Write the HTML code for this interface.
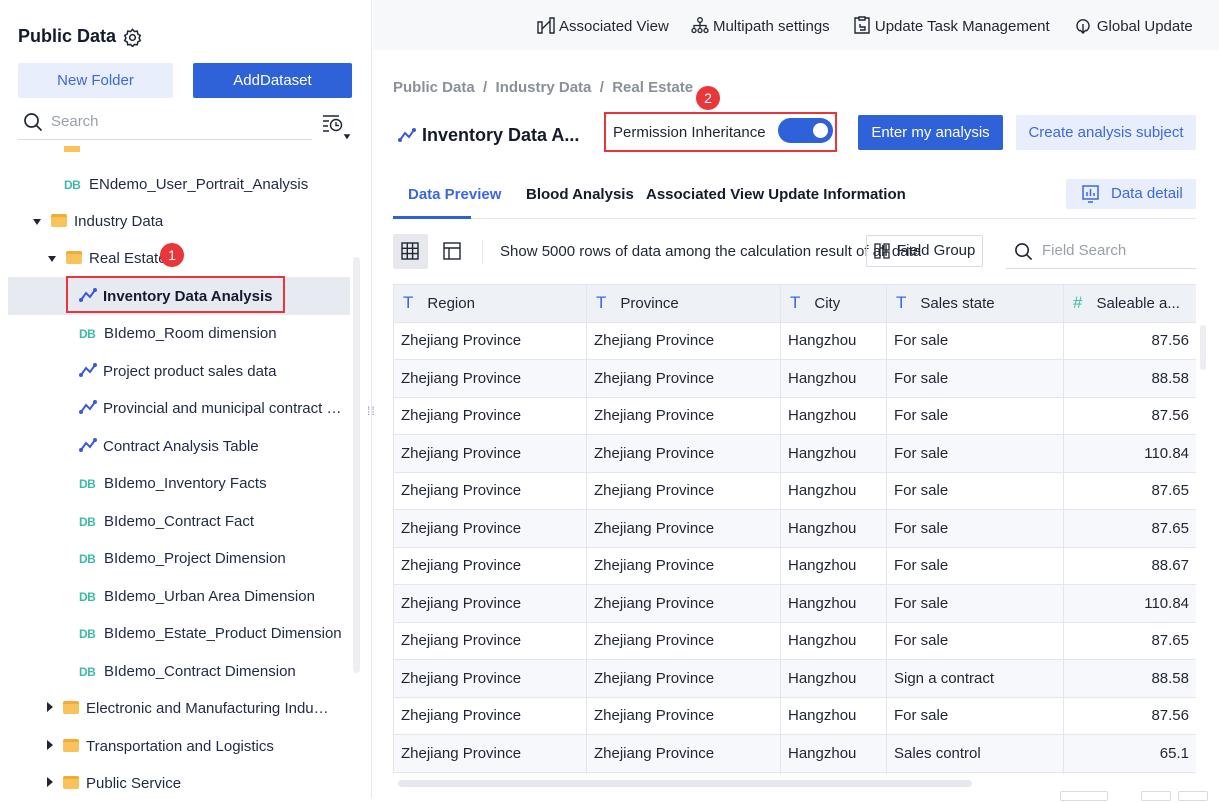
<!DOCTYPE html>
<html><head><meta charset="utf-8"><style>
*{margin:0;padding:0;box-sizing:border-box}
body{width:1219px;height:798px;overflow:hidden;font-family:"Liberation Sans",sans-serif;color:#1f2533;background:#fff;position:relative}
.a{position:absolute;white-space:nowrap}
.left{position:absolute;left:0;top:0;width:372px;height:798px;background:#fff;border-right:1px solid #e6e8ee}
.tr{position:absolute;font-size:15px;color:#1f2a44;height:38px;line-height:38px;white-space:nowrap}
.db{display:inline-block;color:#3dbaa8;font-size:12px;font-weight:bold;width:20px;margin-right:5px;letter-spacing:-0.5px}
.fold{display:inline-block;width:16px;height:13px;background:#f8c35a;border-radius:2px;vertical-align:-1px;margin-right:7px;border-top:3px solid #f0ad35}
.arr{display:inline-block;width:0;height:0;margin-right:10px;vertical-align:1px}
.ad{border-top:5px solid transparent;border-bottom:5px solid transparent;border-left:6px solid #1f2533}
.dn{border-left:4px solid transparent;border-right:4px solid transparent;border-top:6px solid #1f2533}
table{border-collapse:collapse;position:absolute;left:0;top:0;font-size:15px;table-layout:fixed;width:803px}
td,th{height:37.5px;border:1px solid #e3e6ed;padding:0 7px;font-weight:normal;text-align:left;white-space:nowrap;overflow:hidden}
th{background:#eef1f6;color:#1f2533}
th .t{color:#3b68e0;font-size:17px;margin-right:14px;margin-left:2px}
tr:nth-child(odd) td{background:#f7f8fc}
td.n{text-align:right}
.badge{position:absolute;width:24px;height:24px;border-radius:12px;background:#e8363a;color:#fff;font-size:14px;text-align:center;line-height:24px}
</style></head><body>
<div class="left">
 <div class="a" style="left:18px;top:26px;font-size:18px;font-weight:bold;color:#141b2d">Public Data</div>
 <svg class="a" style="left:123px;top:28px" width="19" height="19" viewBox="0 0 20 20" fill="none" stroke="#1f2533" stroke-width="1.6"><circle cx="10" cy="10" r="3"/><path d="M10 1.5l2 2.2 3-.4.6 3 2.6 1.5-1.3 2.7 1.3 2.7-2.6 1.5-.6 3-3-.4-2 2.2-2-2.2-3 .4-.6-3-2.6-1.5 1.3-2.7-1.3-2.7 2.6-1.5.6-3 3 .4z"/></svg>
 <div class="a" style="left:18px;top:63px;width:155px;height:35px;background:#e8eefb;border-radius:2px;color:#3b68e0;font-size:15px;text-align:center;line-height:35px">New Folder</div>
 <div class="a" style="left:193px;top:63px;width:159px;height:35px;background:#2f62d8;border-radius:2px;color:#fff;font-size:15px;text-align:center;line-height:35px">AddDataset</div>
 <div class="a" style="left:64px;top:146px;width:16px;height:6px;background:#f8c35a"></div>
 <div class="a" style="left:88px;top:146px;width:210px;height:6px;overflow:hidden;font-size:15px;line-height:0;color:#1f2a44">&nbsp;</div>
 <svg class="a" style="left:23px;top:112px" width="20" height="20" viewBox="0 0 20 20" fill="none" stroke="#1f2533" stroke-width="1.7"><circle cx="8.5" cy="8.5" r="6.5"/><path d="M13.5 13.5l5 5"/></svg>
 <div class="a" style="left:51px;top:113px;font-size:15px;color:#9aa0ab">Search</div>
 <div class="a" style="left:18px;top:139px;width:294px;height:1px;background:#d8dbe2"></div>
 <svg class="a" style="left:322px;top:113px" width="30" height="26" viewBox="0 0 30 26" fill="none" stroke="#1f2533" stroke-width="1.4"><path d="M1 3h16M1 8h6M1 13h5M1 18h6"/><circle cx="14" cy="12" r="5.5"/><path d="M14 9v3.5h3"/><path d="M23 22l2 3 2-3z" fill="#1f2533"/></svg>
 <div class="tr" style="left:64px;top:166px"><span class="db">DB</span>ENdemo_User_Portrait_Analysis</div>
 <div class="tr" style="left:33px;top:203px"><span class="arr dn"></span><span class="fold"></span>Industry Data</div>
 <div class="tr" style="left:48px;top:240px"><span class="arr dn"></span><span class="fold"></span>Real Estate</div>
 <div class="badge" style="left:160px;top:243px">1</div>
 <div class="a" style="left:8px;top:277px;width:342px;height:38px;background:#e8eaf1"></div>
 <div class="a" style="left:66px;top:276px;width:219px;height:37px;border:2px solid #e8363a"></div>
 <div class="tr" style="left:79px;top:278px;font-weight:bold;color:#141b2d"><svg width="18" height="14" viewBox="0 0 18 14" style="margin-right:6px;vertical-align:-1px"><path d="M2 12L7 5l4 4 5-7" fill="none" stroke="#3b5ad8" stroke-width="2"/><circle cx="2" cy="12" r="2" fill="#3b5ad8"/><circle cx="16" cy="2" r="2" fill="#3b5ad8"/></svg>Inventory Data Analysis</div>
 <div class="tr" style="left:79px;top:315px"><span class="db">DB</span>BIdemo_Room dimension</div>
 <div class="tr" style="left:79px;top:353px"><svg width="18" height="14" viewBox="0 0 18 14" style="margin-right:6px;vertical-align:-1px"><path d="M2 12L7 5l4 4 5-7" fill="none" stroke="#3b5ad8" stroke-width="2"/><circle cx="2" cy="12" r="2" fill="#3b5ad8"/><circle cx="16" cy="2" r="2" fill="#3b5ad8"/></svg>Project product sales data</div>
 <div class="tr" style="left:79px;top:390px"><svg width="18" height="14" viewBox="0 0 18 14" style="margin-right:6px;vertical-align:-1px"><path d="M2 12L7 5l4 4 5-7" fill="none" stroke="#3b5ad8" stroke-width="2"/><circle cx="2" cy="12" r="2" fill="#3b5ad8"/><circle cx="16" cy="2" r="2" fill="#3b5ad8"/></svg>Provincial and municipal contract …</div>
 <div class="tr" style="left:79px;top:428px"><svg width="18" height="14" viewBox="0 0 18 14" style="margin-right:6px;vertical-align:-1px"><path d="M2 12L7 5l4 4 5-7" fill="none" stroke="#3b5ad8" stroke-width="2"/><circle cx="2" cy="12" r="2" fill="#3b5ad8"/><circle cx="16" cy="2" r="2" fill="#3b5ad8"/></svg>Contract Analysis Table</div>
 <div class="tr" style="left:79px;top:465px"><span class="db">DB</span>BIdemo_Inventory Facts</div>
 <div class="tr" style="left:79px;top:503px"><span class="db">DB</span>BIdemo_Contract Fact</div>
 <div class="tr" style="left:79px;top:540px"><span class="db">DB</span>BIdemo_Project Dimension</div>
 <div class="tr" style="left:79px;top:578px"><span class="db">DB</span>BIdemo_Urban Area Dimension</div>
 <div class="tr" style="left:79px;top:615px"><span class="db">DB</span>BIdemo_Estate_Product Dimension</div>
 <div class="tr" style="left:79px;top:653px"><span class="db">DB</span>BIdemo_Contract Dimension</div>
 <div class="tr" style="left:47px;top:690px"><span class="arr ad"></span><span class="fold"></span>Electronic and Manufacturing Indu…</div>
 <div class="tr" style="left:47px;top:728px"><span class="arr ad"></span><span class="fold"></span>Transportation and Logistics</div>
 <div class="tr" style="left:47px;top:765px"><span class="arr ad"></span><span class="fold"></span>Public Service</div>
 <div class="a" style="left:353px;top:257px;width:7px;height:416px;background:#eceef2;border-radius:4px"></div>
</div>
<div class="a" style="left:367px;top:408px;color:#8a93a6;font-size:12px;line-height:6px;letter-spacing:1px">⁞⁞</div>
<div class="a" style="left:373px;top:0;width:846px;height:50px;background:#f7f8fa"></div>
<div class="a" style="left:537px;top:16px;font-size:15px">
 <svg width="18" height="17" viewBox="0 0 18 17" style="vertical-align:-3px;margin-right:4px" fill="none" stroke="#1f2533" stroke-width="1.4"><path d="M1 5h4v11H1zM13 1h4v15h-4zM5 12l8-8"/></svg>Associated View
 <svg width="18" height="17" viewBox="0 0 18 17" style="vertical-align:-3px;margin-left:18px;margin-right:4px" fill="none" stroke="#1f2533" stroke-width="1.3"><circle cx="9" cy="3" r="2.3"/><path d="M9 5.5v3M3 11V8.5h12V11M9 8.5V11"/><circle cx="3" cy="13.5" r="2"/><circle cx="9" cy="13.5" r="2"/><circle cx="15" cy="13.5" r="2"/></svg>Multipath settings
 <svg width="16" height="18" viewBox="0 0 16 18" style="vertical-align:-3px;margin-left:20px;margin-right:5px" fill="none" stroke="#1f2533" stroke-width="1.4"><path d="M5 2H1v15h14V2h-4M5 1h6v3H5z"/><path d="M6 8v3h5v3H6"/></svg>Update Task Management
 <svg width="18" height="18" viewBox="0 0 18 18" style="vertical-align:-3px;margin-left:20px;margin-right:5px" fill="none" stroke="#1f2533" stroke-width="1.4"><path d="M6 15a6 6 0 1 1 6 0M9 8v9M6 14l3 3 3-3"/></svg>Global Update</div>
<div class="a" style="left:393px;top:79px;font-size:15px;color:#8a8f99;font-weight:bold">Public Data &nbsp;/&nbsp; Industry Data &nbsp;/&nbsp; Real Estate</div>
<div class="badge" style="left:696px;top:86px">2</div>
<svg class="a" style="left:398px;top:128px" width="18" height="14" viewBox="0 0 18 14"><path d="M2 12L7 5l4 4 5-7" fill="none" stroke="#3b5ad8" stroke-width="2"/><circle cx="2" cy="12" r="2" fill="#3b5ad8"/><circle cx="16" cy="2" r="2" fill="#3b5ad8"/></svg>
<div class="a" style="left:422px;top:125px;font-size:18px;font-weight:bold;color:#141b2d">Inventory Data A...</div>
<div class="a" style="left:604px;top:112px;width:233px;height:40px;border:2px solid #e8363a"></div>
<div class="a" style="left:613px;top:124px;font-size:15px">Permission Inheritance</div>
<div class="a" style="left:778px;top:118px;width:55px;height:25px;background:#2f62d8;border-radius:13px"><div style="position:absolute;right:5px;top:5px;width:15px;height:15px;border-radius:8px;background:#fff"></div></div>
<div class="a" style="left:858px;top:115px;width:145px;height:35px;background:#2f62d8;color:#fff;font-size:15px;text-align:center;line-height:35px;border-radius:2px">Enter my analysis</div>
<div class="a" style="left:1016px;top:115px;width:180px;height:35px;background:#e8eefb;color:#3b68e0;font-size:15px;text-align:center;line-height:35px;border-radius:2px">Create analysis subject</div>
<div class="a" style="left:408px;top:186px;font-size:15px;font-weight:bold;color:#3b68e0">Data Preview</div>
<div class="a" style="left:526px;top:186px;font-size:15px;font-weight:bold;color:#141b2d">Blood Analysis</div>
<div class="a" style="left:646px;top:186px;font-size:15px;font-weight:bold;color:#141b2d">Associated View Update Information</div>
<div class="a" style="left:393px;top:218px;width:803px;height:1px;background:#e3e6ed"></div>
<div class="a" style="left:393px;top:216px;width:78px;height:3px;background:#2f62d8"></div>
<div class="a" style="left:1066px;top:179px;width:130px;height:30px;background:#e8eefb;color:#3b68e0;font-size:15px;line-height:30px;padding-left:45px;border-radius:2px">Data detail</div>
<svg class="a" style="left:1082px;top:185px" width="17" height="18" viewBox="0 0 17 18" fill="none" stroke="#3b68e0" stroke-width="1.5"><rect x="1" y="1" width="15" height="13"/><path d="M5 11V7M8.5 11V4M12 11V8M6 17h5"/></svg>
<div class="a" style="left:393px;top:234px;width:35px;height:35px;background:#e6e8ee;border-radius:2px"></div>
<svg class="a" style="left:401px;top:242px" width="18" height="18" viewBox="0 0 18 18" fill="none" stroke="#1f2533" stroke-width="1.4"><rect x="1" y="1" width="16" height="16"/><path d="M6.3 1v16M11.6 1v16M1 6.3h16M1 11.6h16"/></svg>
<svg class="a" style="left:443px;top:242px" width="18" height="18" viewBox="0 0 18 18" fill="none" stroke="#1f2533" stroke-width="1.4"><rect x="1" y="1" width="16" height="16"/><path d="M1 6h16M6 6v11"/></svg>
<div class="a" style="left:482px;top:240px;width:1px;height:24px;background:#e3e6ed"></div>
<div class="a" style="left:500px;top:243px;font-size:15px">Show 5000 rows of data among the calculation result of all data</div>
<div class="a" style="left:866px;top:235px;width:117px;height:32px;border:1px solid #d8dbe2;font-size:15px;line-height:30px;padding-left:30px;border-radius:2px">Field Group</div>
<svg class="a" style="left:874px;top:243px" width="16" height="16" viewBox="0 0 16 16" fill="none" stroke="#1f2533" stroke-width="1.3"><path d="M1 1h5v14H1zM6 5h4M10 1h5v6h-5zM10 9h5v6h-5z"/></svg>
<svg class="a" style="left:1014px;top:242px" width="19" height="19" viewBox="0 0 20 20" fill="none" stroke="#1f2533" stroke-width="1.7"><circle cx="8.5" cy="8.5" r="6.5"/><path d="M13.5 13.5l5 5"/></svg>
<div class="a" style="left:1042px;top:242px;font-size:15px;color:#9aa0ab">Field Search</div>
<div class="a" style="left:1006px;top:268px;width:190px;height:1px;background:#d8dbe2"></div>
<div class="a" style="left:393px;top:284px;width:803px;height:490px;overflow:hidden">
<table>
<colgroup><col style="width:193px"><col style="width:194px"><col style="width:106px"><col style="width:177px"><col style="width:133px"></colgroup>
<tr><th><span class="t">T</span>Region</th><th><span class="t">T</span>Province</th><th><span class="t">T</span>City</th><th><span class="t">T</span>Sales state</th><th><span class="t" style="color:#3dbaa8">#</span>Saleable a...</th></tr>
<tr><td>Zhejiang Province</td><td>Zhejiang Province</td><td>Hangzhou</td><td>For sale</td><td class="n">87.56</td></tr>
<tr><td>Zhejiang Province</td><td>Zhejiang Province</td><td>Hangzhou</td><td>For sale</td><td class="n">88.58</td></tr>
<tr><td>Zhejiang Province</td><td>Zhejiang Province</td><td>Hangzhou</td><td>For sale</td><td class="n">87.56</td></tr>
<tr><td>Zhejiang Province</td><td>Zhejiang Province</td><td>Hangzhou</td><td>For sale</td><td class="n">110.84</td></tr>
<tr><td>Zhejiang Province</td><td>Zhejiang Province</td><td>Hangzhou</td><td>For sale</td><td class="n">87.65</td></tr>
<tr><td>Zhejiang Province</td><td>Zhejiang Province</td><td>Hangzhou</td><td>For sale</td><td class="n">87.65</td></tr>
<tr><td>Zhejiang Province</td><td>Zhejiang Province</td><td>Hangzhou</td><td>For sale</td><td class="n">88.67</td></tr>
<tr><td>Zhejiang Province</td><td>Zhejiang Province</td><td>Hangzhou</td><td>For sale</td><td class="n">110.84</td></tr>
<tr><td>Zhejiang Province</td><td>Zhejiang Province</td><td>Hangzhou</td><td>For sale</td><td class="n">87.65</td></tr>
<tr><td>Zhejiang Province</td><td>Zhejiang Province</td><td>Hangzhou</td><td>Sign a contract</td><td class="n">88.58</td></tr>
<tr><td>Zhejiang Province</td><td>Zhejiang Province</td><td>Hangzhou</td><td>For sale</td><td class="n">87.56</td></tr>
<tr><td>Zhejiang Province</td><td>Zhejiang Province</td><td>Hangzhou</td><td>Sales control</td><td class="n">65.1</td></tr>
<tr><td>&nbsp;</td><td></td><td></td><td></td><td></td></tr>
</table></div>
<div class="a" style="left:398px;top:780px;width:574px;height:7px;background:#e6e8ee;border-radius:4px"></div>
<div class="a" style="left:1200px;top:325px;width:6px;height:45px;background:#eceef2;border-radius:3px"></div>
<div class="a" style="left:1060px;top:791px;width:48px;height:10px;border:1px solid #d8dbe2;border-radius:2px"></div>
<div class="a" style="left:1141px;top:791px;width:30px;height:10px;border:1px solid #d8dbe2;border-radius:2px"></div>
<div class="a" style="left:1178px;top:791px;width:30px;height:10px;border:1px solid #d8dbe2;border-radius:2px"></div>
</body></html>
